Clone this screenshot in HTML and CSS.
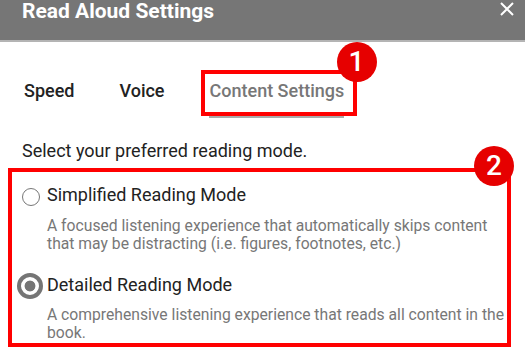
FILE: index.html
```html
<!DOCTYPE html>
<html>
<head>
<meta charset="utf-8">
<link rel="stylesheet" href="styles.css">
</head>
<body>
<div class="dialog">
  <header class="titlebar">
    <h1 class="title">Read Aloud Settings</h1>
    <span class="close" aria-label="Close">
      <svg width="16" height="16" viewBox="0 0 16 16"><path d="M2 2 L14 14 M14 2 L2 14" stroke="#fff" stroke-width="2" fill="none"/></svg>
    </span>
  </header>
  <nav class="tabs">
    <span class="tab">Speed</span>
    <span class="tab">Voice</span>
    <span class="tab active">Content Settings<span class="hl-tab"></span><span class="badge badge-1">1</span></span>
  </nav>
  <p class="prompt">Select your preferred reading mode.</p>
  <div class="options">
    <span class="badge badge-2">2</span>
    <div class="option">
      <div class="option-head"><span class="radio"></span><span class="label">Simplified Reading Mode</span></div>
      <p class="desc">A focused listening experience that automatically skips content that may be distracting (i.e. figures, footnotes, etc.)</p>
    </div>
    <div class="option">
      <div class="option-head"><span class="radio checked"></span><span class="label">Detailed Reading Mode</span></div>
      <p class="desc">A comprehensive listening experience that reads all content in the book.</p>
    </div>
  </div>
</div>
</body>
</html>
```
FILE: styles.css
```css
html, body { margin: 0; padding: 0; background: #fff; }
body { width: 525px; height: 348px; overflow: hidden; font-family: Roboto, "Liberation Sans", sans-serif; }
.dialog { position: relative; }
.titlebar {
  height: 40px;
  background: #767676;
  border-bottom: 2px solid #b4b4b4;
  display: flex;
  align-items: flex-start;
  justify-content: space-between;
  padding: 0 10px 0 22px;
}
.title { margin: 0; color: #fff; font-size: 21px; font-weight: 700; line-height: 22px; }
.close { display: flex; padding-top: 1px; }
.tabs { display: flex; padding: 38px 0 0 24px; height: 38px; }
.tab { position: relative; font-size: 18px; font-weight: 500; line-height: 22px; color: #222; height: 36px; }
.tab:nth-child(1) { margin-right: 45px; }
.tab:nth-child(2) { margin-right: 45px; }
.tab.active { color: #777; }
.tab.active::after { content: ""; position: absolute; left: -1px; right: 0; top: 35px; height: 3px; background: #aaa; }
.hl-tab { position: absolute; left: -9px; top: -10px; width: 156px; height: 46px; box-sizing: border-box; border: 4px solid #f00; z-index: 2; }
.badge {
  position: absolute; z-index: 3;
  width: 40px; height: 40px; border-radius: 50%;
  background: #e60000; color: #fff;
  font-size: 28px; font-weight: 500; line-height: 40px; text-align: center;
}
.badge-1 { left: 127px; top: -38px; }
.badge-2 { right: -7px; top: -26px; }
.prompt { margin: 0; padding: 22px 0 0 22px; font-size: 18px; line-height: 22px; color: #222; }
.options {
  position: relative;
  box-sizing: border-box;
  margin: 6px 0 0 8px;
  width: 503px;
  height: 179px;
  border: 4px solid #f00;
  padding: 12px 0 0 0;
}
.option + .option { margin-top: 21px; }
.option-head { display: flex; align-items: center; height: 22px; }
.radio { width: 18px; height: 18px; box-sizing: border-box; border: 1.5px solid #777; border-radius: 50%; margin: 4px 7px 0 10px; flex: none; }
.radio.checked { width: 26px; height: 26px; border: 4px solid #757575; background: radial-gradient(circle, #757575 0 5px, #fff 5.8px); margin: 2px 4px 0 5px; }
.label { font-size: 18px; line-height: 22px; color: #222; }
.desc { margin: 10.5px 0 0 35px; font-size: 15.7px; line-height: 18px; color: #777; }
```
